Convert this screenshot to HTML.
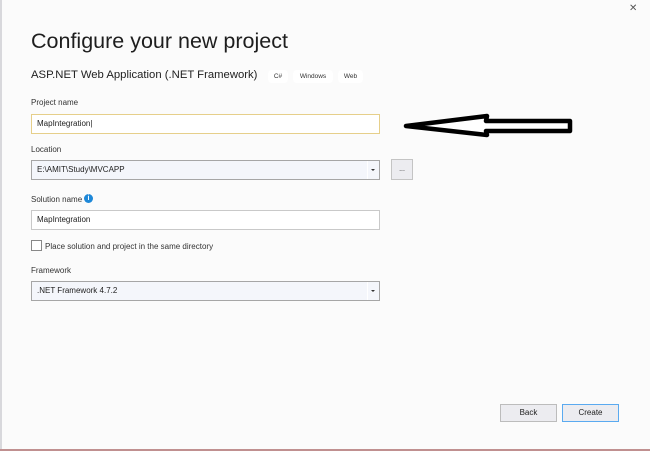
<!DOCTYPE html>
<html><head><style>
body{margin:0;width:650px;height:451px;background:#fbfbfb;font-family:"Liberation Sans",sans-serif;position:relative;overflow:hidden;color:#1e1e1e}
.a{position:absolute}
.lbl{font-size:8px;color:#333}
.in{position:absolute;left:31px;width:349px;height:20px;box-sizing:border-box;border:1px solid #c9c9c9;background:#fff;font-size:8px;line-height:18px;padding-left:5px}
.dd{background:#f4f6fb;border-color:#a6a6a6}
.dd:after{content:"";position:absolute;right:4px;top:8px;border:2px solid transparent;border-top:2px solid #333}
.dd:before{content:"";position:absolute;right:11px;top:0;bottom:0;width:1px;background:#fff}
.tag{position:absolute;top:70px;height:13px;background:#fff;border-radius:4px;font-size:6.5px;line-height:13px;text-align:center;color:#333}
.btn{position:absolute;top:404px;width:57px;height:18px;box-sizing:border-box;background:#ececf0;border:1px solid #bcbcbc;font-size:8px;line-height:16px;text-align:center}
</style></head><body>
<div class="a" style="left:0;top:0;width:2px;height:451px;background:#d8d8dc"></div>
<div class="a" style="left:0;top:449px;width:650px;height:2px;background:#c09090"></div>
<div class="a" style="left:629px;top:3px;font-size:10px;color:#555">✕</div>
<div class="a" style="left:31px;top:29px;font-size:21.5px;color:#1e1e1e">Configure your new project</div>
<div class="a" style="left:31px;top:69px;font-size:11.3px;color:#1e1e1e">ASP.NET Web Application (.NET Framework)</div>
<div class="tag" style="left:268px;width:20px">C#</div>
<div class="tag" style="left:293px;width:40px">Windows</div>
<div class="tag" style="left:338px;width:25px">Web</div>
<div class="a lbl" style="left:31px;top:98px">Project name</div>
<div class="in" style="top:114px;border-color:#e6cf8a">MapIntegration|</div>
<div class="a lbl" style="left:31px;top:145px">Location</div>
<div class="in dd" style="top:160px">E:\AMIT\Study\MVCAPP</div>
<div class="a" style="left:391px;top:159px;width:22px;height:21px;box-sizing:border-box;border:1px solid #c4c4c4;background:#ececf0;font-size:7px;text-align:center;line-height:20px">...</div>
<div class="a lbl" style="left:31px;top:195px">Solution name</div>
<div class="a" style="left:84px;top:194px;width:9px;height:9px;border-radius:50%;background:#1e88d8;color:#fff;font-size:7px;line-height:9px;text-align:center;font-weight:bold">i</div>
<div class="in" style="top:210px">MapIntegration</div>
<div class="a" style="left:31px;top:240px;width:9px;height:9px;border:1px solid #888;background:#fff"></div>
<div class="a lbl" style="left:45px;top:242px">Place solution and project in the same directory</div>
<div class="a lbl" style="left:31px;top:266px">Framework</div>
<div class="in dd" style="top:281px">.NET Framework 4.7.2</div>
<svg class="a" style="left:0;top:0" width="650" height="451"><path d="M406 126 L487 116 L486 121 L570 121 L570 131 L486 131 L487 135 Z" fill="#fff" stroke="#000" stroke-width="4.5" stroke-linejoin="round"/></svg>
<div class="btn" style="left:500px">Back</div>
<div class="btn" style="left:562px;border-color:#5aaaf0">Create</div>
</body></html>
